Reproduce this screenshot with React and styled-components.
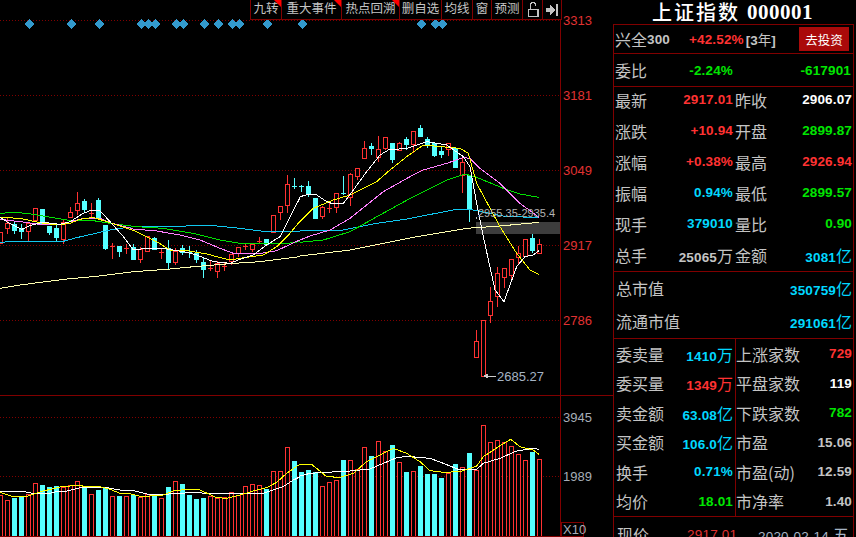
import styled, { createGlobalStyle } from 'styled-components';

const LINE = '#800000';
const RED = '#ff3232';
const GREEN = '#00e600';
const CYAN = '#00d8ff';
const WHITE = '#ffffff';
const GREY = '#c4c4c4';
const BAR = '#55ffff';

const GlobalStyle = createGlobalStyle`
  html, body {
    margin: 0;
    height: 100%;
    background: #000;
    overflow: hidden;
  }
`;

const Page = styled.div`
  display: flex;
  width: 856px;
  height: 537px;
  background: #000;
  overflow: hidden;
  font-family: 'Liberation Sans', 'Noto Sans CJK SC', sans-serif;
`;

const ChartColumn = styled.div`
  position: relative;
  display: flex;
  flex-direction: column;
  width: 613px;
  flex: none;
`;

const Pane = styled.svg`
  display: block;
  width: 613px;
  height: ${props => props.$height}px;
  flex: none;
`;

const Toolbar = styled.div`
  position: absolute;
  top: 0;
  left: 250px;
  display: flex;
  height: 19px;
  background: #000;
  border-bottom: 1px solid ${LINE};
  border-right: 1px solid ${LINE};
`;

const ToolButton = styled.div`
  position: relative;
  display: flex;
  align-items: center;
  justify-content: center;
  box-sizing: border-box;
  width: ${props => props.$width}px;
  border-left: 1px solid ${LINE};
  color: ${GREY};
  font-size: 12.5px;
  line-height: 19px;
  white-space: nowrap;

  ${props =>
    props.$flag &&
    `&::after {
      content: '';
      position: absolute;
      top: 0;
      right: 0;
      border-top: 7px solid #ff0000;
      border-left: 7px solid transparent;
    }`}
`;

const SidePanel = styled.div`
  display: flex;
  flex-direction: column;
  width: 243px;
  height: 537px;
  flex: none;
`;

const Title = styled.div`
  height: 24px;
  display: flex;
  align-items: center;
  justify-content: center;
  gap: 7px;
  padding-right: 4px;
  color: #fff;
  font-family: 'Noto Sans CJK SC', sans-serif;
  font-size: 20px;
  font-weight: 500;
  line-height: 24px;
  letter-spacing: 2px;
  white-space: nowrap;

  span {
    font-family: 'Liberation Serif', serif;
    font-size: 21px;
    font-weight: 700;
    letter-spacing: 0.5px;
  }
`;

const Section = styled.div`
  box-sizing: border-box;
  width: 241px;
  height: ${props => props.$height}px;
  border: 1px solid ${LINE};
  border-top: ${props => (props.$first ? `1px solid ${LINE}` : 'none')};
  flex: none;
`;

const PromoRow = styled(Section)`
  display: flex;
  align-items: center;
  padding-left: 1px;
`;

const Label = styled.span`
  color: ${GREY};
  font-family: 'Noto Sans CJK SC', sans-serif;
  font-size: 16px;
  line-height: 20px;
  white-space: nowrap;
`;

const Num = styled.span`
  color: ${props => props.$color};
  font-family: 'Liberation Sans', sans-serif;
  font-size: 13.5px;
  font-weight: 700;
  letter-spacing: 0.15px;
  white-space: nowrap;
`;

const Unit = styled.span`
  font-family: 'Noto Sans CJK SC', sans-serif;
  font-size: 16px;
  font-weight: 400;
  letter-spacing: 0;
`;

const PromoRate = styled(Num)`
  margin-left: 19px;
`;

const PromoTerm = styled.span`
  margin-left: 2px;
  color: ${GREY};
  font-size: 13.5px;
  font-weight: 700;
  white-space: nowrap;

  i {
    font-family: 'Noto Sans CJK SC', sans-serif;
    font-style: normal;
    font-weight: 400;
  }
`;

const InvestButton = styled.div`
  margin-left: auto;
  margin-right: 4px;
  width: 50px;
  height: 24px;
  display: flex;
  align-items: center;
  justify-content: center;
  background: #aa0a0a;
  color: #fff;
  font-family: 'Noto Sans CJK SC', sans-serif;
  font-size: 12.5px;
`;

const OrderRow = styled(Section)`
  display: grid;
  grid-template-columns: 119px 1fr;
  align-items: center;
  padding-right: 2px;
`;

const Cell = styled.div`
  display: flex;
  align-items: center;
  justify-content: space-between;
  padding-left: ${props => props.$left || 0}px;
  padding-right: ${props => props.$right || 0}px;
  min-width: 0;
`;

const QuoteGrid = styled(Section)`
  display: grid;
  grid-template-columns: 121px 1fr;
  grid-auto-rows: 31px;
  align-content: center;
  align-items: center;
  padding: 0 1px 4px 0;
`;

const WideRows = styled(Section)`
  display: grid;
  grid-auto-rows: 33px;
  align-content: center;
  align-items: center;
  padding: 0 1px 2px 0;
`;

const BreadthGrid = styled(Section)`
  display: grid;
  grid-template-columns: 121px 1fr;
  grid-auto-rows: 1fr;
  align-items: center;
  padding-right: 1px;
  background: linear-gradient(${LINE}, ${LINE}) 121px 0 / 1px 100% no-repeat;
`;

const PriceRow = styled.div`
  box-sizing: border-box;
  width: 241px;
  flex: 1;
  display: flex;
  align-items: center;
  padding: 5px 4px 0 3px;
  border-left: 1px solid ${LINE};
  border-right: 1px solid ${LINE};
`;

const ThinNum = styled.span`
  color: ${props => props.$color};
  font-size: 13.5px;
  letter-spacing: 0.2px;
  white-space: nowrap;
  margin-left: ${props => props.$gap};
`;

// chart data, y values read off the picture at 3x
const candlesLeft = [
  [155, 155, 190, 190, 1], [115, 130, 145, 162, 1], [125, 132, 150, 162, 0], [132, 145, 152, 178, 0],
  [130, 130, 152, 185, 1], [85, 85, 120, 120, 1], [88, 88, 130, 130, 0], [137, 137, 157, 165, 0],
  [135, 145, 172, 185, 0], [120, 125, 178, 192, 1], [80, 95, 110, 110, 1], [37, 68, 90, 105, 1],
  [57, 64, 88, 100, 0], [70, 100, 100, 118, 1], [55, 60, 112, 115, 0], [135, 135, 205, 210, 0],
  [188, 198, 198, 236, 1], [198, 198, 214, 232, 0], [192, 205, 205, 222, 1], [192, 200, 237, 237, 0],
  [200, 208, 238, 248, 1], [167, 167, 212, 215, 1], [170, 175, 207, 207, 0], [205, 217, 217, 237, 1],
  [180, 205, 246, 268, 0], [205, 212, 246, 255, 1], [195, 203, 215, 225, 0], [198, 217, 217, 235, 0],
  [210, 218, 238, 248, 0], [232, 246, 268, 293, 0], [243, 265, 265, 272, 1], [243, 250, 272, 293, 1],
  [250, 257, 257, 272, 1], [222, 222, 243, 255, 1], [202, 202, 218, 232, 1], [190, 198, 198, 210, 1],
  [192, 192, 206, 215, 1], [172, 182, 182, 190, 1], [177, 177, 192, 195, 0], [105, 105, 156, 156, 1],
  [78, 78, 97, 120, 1], [-15, 12, 75, 100, 1], [-6, 17, 17, 28, 0], [15, 17, 17, 35, 0],
];

const candlesRight = [
  [184, 198, 218, 232, 0], [234, 234, 294, 297, 0], [258, 262, 288, 298, 1], [250, 263, 263, 278, 1],
  [220, 220, 262, 280, 1], [168, 220, 220, 225, 0], [160, 163, 232, 258, 1], [145, 145, 167, 180, 1],
  [62, 85, 115, 115, 1], [70, 78, 85, 105, 0], [47, 88, 110, 125, 1], [52, 52, 84, 90, 1],
  [70, 70, 118, 128, 0], [65, 70, 90, 92, 1], [50, 57, 72, 90, 0], [34, 34, 72, 98, 1],
  [15, 25, 48, 52, 0], [50, 58, 75, 85, 0], [68, 68, 105, 110, 0], [78, 93, 102, 115, 0],
  [68, 68, 88, 108, 1], [85, 85, 140, 143, 0], [115, 127, 165, 218, 1], [165, 165, 268, 305, 0],
  [630, 664, 712, 712, 1], [600, 600, 767, 767, 1], [502, 544, 584, 608, 1], [442, 460, 527, 560, 1],
  [445, 445, 470, 505, 1], [418, 418, 466, 485, 1], [378, 400, 410, 432, 1], [358, 358, 407, 410, 1],
  [343, 355, 390, 400, 0], [358, 372, 400, 400, 1],
];

const candles = [
  ...candlesLeft.map(c => [...c.slice(0, 4).map(v => Math.round(180 + v / 3)), c[4]]),
  ...candlesRight.map(c => [...c.slice(0, 4).map(v => Math.round(120 + v / 3)), c[4]]),
];

const volumes = [
  [300, 1], [315, 1], [308, 0], [305, 0], [297, 1], [264, 1], [270, 0], [276, 0], [273, 0], [276, 1],
  [270, 1], [258, 1], [276, 0], [297, 1], [285, 0], [278, 0], [303, 1], [303, 0], [303, 1], [300, 0],
  [306, 1], [297, 1], [300, 0], [309, 1], [276, 0], [258, 1], [267, 0], [300, 0], [312, 0], [309, 0],
  [303, 1], [309, 1], [306, 1], [291, 1], [300, 1], [273, 1], [267, 1], [270, 1], [282, 0], [228, 1],
  [228, 1], [156, 1], [198, 0], [231, 0], [225, 0], [231, 0], [273, 1], [261, 1], [255, 1], [195, 0],
  [195, 1], [222, 1], [156, 1], [183, 0], [138, 1], [168, 1], [150, 0], [201, 1], [231, 0], [228, 1],
  [213, 0], [237, 0], [237, 0], [249, 0], [234, 1], [207, 0], [216, 1], [174, 0], [225, 1], [90, 1],
  [141, 1], [135, 1], [141, 1], [153, 1], [177, 1], [195, 1], [171, 0], [192, 1],
].map(([top, up]) => [Math.round(395 + top / 3), up]);

const toPoints = (left, right) =>
  [
    ...left.map(([x, y]) => [x / 3, 180 + y / 3]),
    ...right.map(([x, y]) => [300 + x / 3, 120 + y / 3]),
  ]
    .map(p => p.join(','))
    .join(' ');

const mainLines = [
  {
    color: '#ffffb0',
    points: toPoints(
      [[0, 325], [60, 315], [200, 297], [280, 290], [400, 275], [500, 268], [560, 262], [700, 250], [780, 245], [899, 230]],
      [[0, 408], [150, 390], [350, 350], [500, 325], [600, 318], [717, 307]]
    ),
  },
  {
    color: '#10c8f0',
    points: toPoints(
      [[0, 188], [30, 184], [190, 184], [230, 173], [300, 157], [340, 148], [400, 140], [640, 137], [720, 145], [800, 155], [899, 155]],
      [[0, 333], [130, 330], [230, 310], [320, 297], [470, 268], [510, 268], [620, 290], [717, 292]]
    ),
  },
  {
    color: '#00e000',
    points: toPoints(
      [[0, 100], [50, 97], [100, 103], [200, 120], [280, 122], [330, 130], [410, 140], [490, 145], [580, 160], [660, 180], [720, 190], [850, 192], [899, 185]],
      [[0, 367], [70, 360], [150, 335], [240, 285], [340, 230], [440, 180], [495, 162], [530, 172], [610, 205], [660, 222], [717, 232]]
    ),
  },
  {
    color: '#ff80ff',
    points: toPoints(
      [[0, 118], [60, 125], [120, 133], [170, 135], [210, 125], [250, 115], [300, 115], [330, 128], [400, 147], [470, 153], [540, 165], [600, 180], [660, 205], [700, 220], [770, 222], [830, 212], [899, 180]],
      [[0, 360], [30, 348], [90, 330], [150, 295], [250, 215], [330, 170], [370, 150], [440, 130], [490, 113], [510, 115], [540, 145], [600, 190], [660, 250], [717, 292]]
    ),
  },
  {
    color: '#ffff00',
    points: toPoints(
      [[0, 112], [60, 115], [120, 128], [170, 135], [210, 130], [240, 118], [280, 112], [320, 125], [380, 145], [410, 155], [470, 185], [510, 210], [560, 212], [620, 222], [690, 240], [740, 232], [790, 225], [830, 200], [870, 160], [899, 125]],
      [[0, 305], [40, 265], [100, 240], [150, 225], [230, 185], [270, 150], [320, 110], [370, 75], [480, 85], [505, 100], [530, 190], [600, 320], [650, 400], [690, 450], [717, 463]]
    ),
  },
  {
    color: '#ffffff',
    points: toPoints(
      [[0, 112], [25, 128], [65, 148], [95, 135], [130, 127], [180, 133], [210, 125], [250, 100], [275, 90], [298, 90], [330, 125], [370, 170], [400, 210], [440, 205], [500, 207], [550, 215], [590, 225], [640, 245], [690, 250], [715, 240], [760, 225], [800, 195], [840, 170], [870, 110], [899, 55]],
      [[0, 230], [30, 222], [50, 225], [80, 245], [100, 252], [130, 250], [160, 210], [200, 155], [240, 105], [265, 90], [320, 85], [380, 65], [440, 75], [490, 110], [510, 140], [530, 250], [550, 350], [585, 510], [612, 545], [650, 440], [675, 410], [700, 405], [717, 392]]
    ),
  },
];

const volPoints = (left, right) =>
  [
    ...left.map(([x, y]) => [x / 3, 395 + y / 3]),
    ...right.map(([x, y]) => [300 + x / 3, 395 + y / 3]),
  ]
    .map(p => p.join(','))
    .join(' ');

const volumeLines = [
  {
    color: '#ffffff',
    points: volPoints(
      [[0, 290], [75, 290], [100, 296], [150, 295], [170, 290], [200, 288], [240, 278], [320, 278], [370, 287], [400, 287], [440, 297], [490, 300], [520, 295], [590, 293], [640, 296], [730, 297], [790, 295], [820, 285], [850, 275], [880, 255], [899, 246]],
      [[0, 243], [30, 235], [80, 232], [150, 228], [210, 222], [250, 205], [290, 188], [320, 184], [390, 190], [430, 205], [480, 225], [530, 223], [550, 205], [600, 190], [650, 168], [700, 160], [717, 163]]
    ),
  },
  {
    color: '#ffff00',
    points: volPoints(
      [[0, 292], [40, 305], [75, 306], [100, 298], [130, 288], [180, 276], [220, 272], [300, 275], [330, 283], [360, 295], [390, 296], [420, 304], [450, 303], [490, 300], [520, 288], [560, 283], [600, 285], [650, 308], [680, 310], [720, 300], [770, 285], [800, 278], [830, 262], [860, 235], [899, 208]],
      [[0, 210], [35, 208], [80, 245], [120, 247], [160, 235], [200, 200], [240, 180], [280, 160], [320, 175], [360, 200], [390, 227], [430, 232], [480, 230], [530, 213], [550, 185], [600, 152], [632, 133], [660, 155], [700, 165], [717, 178]]
    ),
  },
];

const diamonds = [29, 71, 99, 141, 148, 155, 176, 183, 204, 218, 232, 239, 267, 302, 421, 435, 442];
const mainGrid = [20, 95, 170, 245, 320];
const mainTicks = [
  ['3313', 25], ['3181', 100], ['3049', 175], ['2917', 250], ['2786', 325],
];

const toolItems = [
  { text: '九转', width: 31, flag: true },
  { text: '重大事件', width: 60, flag: true },
  { text: '热点回溯', width: 58, flag: true },
  { text: '删自选', width: 42 },
  { text: '均线', width: 31 },
  { text: '窗', width: 19 },
  { text: '预测', width: 31 },
];

const ChartText = styled.text`
  font-family: 'Liberation Sans', sans-serif;
  font-size: ${props => props.$size || 13}px;
  fill: ${props => props.$color};
`;

function Candle({ index, data }) {
  const [hi, top, bot, lo, up] = data;
  const x = 7 * index + 0.5;
  const color = up ? RED : BAR;
  if (top === bot) {
    return (
      <g stroke={color}>
        <line x1={x} x2={x} y1={hi} y2={lo} />
        <line x1={x - 2.5} x2={x + 2.5} y1={top + 0.5} y2={top + 0.5} />
      </g>
    );
  }
  return (
    <g stroke={color}>
      <line x1={x} x2={x} y1={hi} y2={top} />
      <line x1={x} x2={x} y1={bot} y2={lo} />
      <rect
        x={x - 2}
        y={top + 0.5}
        width={4}
        height={bot - top}
        fill={up ? '#000' : BAR}
      />
    </g>
  );
}

function MainChart() {
  return (
    <Pane $height={396} viewBox='0 0 613 396' shapeRendering='crispEdges'>
      {mainGrid.map(y => (
        <line key={y} x1={0} x2={560} y1={y + 0.5} y2={y + 0.5} stroke={LINE} strokeDasharray='1 2' />
      ))}
      {diamonds.map(x => (
        <path key={x} d={`M${x} 19 L${x + 5} 24 L${x} 29 L${x - 5} 24 Z`} fill='#3399cc' />
      ))}
      {candles.map((c, i) => (
        <Candle key={i} index={i} data={c} />
      ))}
      <rect x={476} y={222} width={84} height={12} fill='#444' fillOpacity={0.9} />
      {mainLines.map(l => (
        <polyline key={l.color} points={l.points} fill='none' stroke={l.color} strokeWidth={1} />
      ))}
      <rect x={476} y={217} width={1} height={2} fill='#bbb' />
      <ChartText x={478} y={217} $size={11} $color='#b4b4b4'>2955.35-2935.4</ChartText>
      <path d='M483 376 L488 373.5 L488 378.5 Z' fill='#ccc' />
      <line x1={487} x2={496} y1={376.5} y2={376.5} stroke='#ccc' />
      <ChartText x={497} y={381} $color='#a6b4c4'>2685.27</ChartText>
      <line x1={560.5} x2={560.5} y1={0} y2={396} stroke={LINE} />
      {mainTicks.map(([text, y]) => (
        <ChartText key={text} x={563} y={y} $color='#e03232'>
          {text}
        </ChartText>
      ))}
      <line x1={0} x2={613} y1={396} y2={396} stroke={LINE} strokeWidth={2} />
    </Pane>
  );
}

function VolumeChart() {
  return (
    <Pane $height={141} viewBox='0 396 613 141' shapeRendering='crispEdges'>
      {[417, 476].map(y => (
        <line key={y} x1={0} x2={560} y1={y + 0.5} y2={y + 0.5} stroke={LINE} strokeDasharray='1 2' />
      ))}
      {volumes.map(([top, up], i) => (
        <rect
          key={i}
          x={7 * i - 1.5}
          y={top + 0.5}
          width={4}
          height={536 - top}
          fill={up ? '#000' : BAR}
          stroke={up ? RED : BAR}
        />
      ))}
      {volumeLines.map(l => (
        <polyline key={l.color} points={l.points} fill='none' stroke={l.color} strokeWidth={1} />
      ))}
      <line x1={560.5} x2={560.5} y1={396} y2={537} stroke={LINE} />
      <line x1={0} x2={560} y1={536.5} y2={536.5} stroke={LINE} />
      <ChartText x={563} y={422} $color='#a6aeb8'>3945</ChartText>
      <ChartText x={563} y={481} $color='#a6aeb8'>1989</ChartText>
      <rect x={561.5} y={522.5} width={22} height={14} fill='none' stroke={LINE} />
      <ChartText x={563} y={534} $color='#a6aeb8'>X10</ChartText>
    </Pane>
  );
}

function LockIcon() {
  return (
    <svg width='12' height='15' viewBox='0 0 12 15' shapeRendering='crispEdges'>
      <path d='M1.5 7.5V14.5H11V7.5ZM3.5 7.5V2.5Q3.5 0.8 6 0.8Q8.5 0.8 8.5 2.5V4' fill='none' stroke={GREY} strokeWidth='1.2' />
    </svg>
  );
}

function NextIcon() {
  return (
    <svg width='13' height='12' viewBox='0 0 13 12' shapeRendering='crispEdges'>
      <path d='M0 4H4V1L9 6L4 11V8H0ZM10 0H12V12H10Z' fill={GREY} />
    </svg>
  );
}

function Tools() {
  return (
    <Toolbar>
      {toolItems.map(item => (
        <ToolButton key={item.text} $width={item.width} $flag={item.flag}>
          {item.text}
        </ToolButton>
      ))}
      <ToolButton $width={20}><LockIcon /></ToolButton>
      <ToolButton $width={19}><NextIcon /></ToolButton>
    </Toolbar>
  );
}

const quotes = [
  ['最新', '2917.01', RED, '昨收', '2906.07', WHITE],
  ['涨跌', '+10.94', RED, '开盘', '2899.87', GREEN],
  ['涨幅', '+0.38%', RED, '最高', '2926.94', RED],
  ['振幅', '0.94%', CYAN, '最低', '2899.57', GREEN],
  ['现手', '379010', CYAN, '量比', '0.90', GREEN],
  ['总手', '25065', GREY, '金额', '3081', CYAN],
];

const breadth = [
  ['委卖量', '1410', '万', CYAN, '上涨家数', '729', RED],
  ['委买量', '1349', '万', RED, '平盘家数', '119', WHITE],
  ['卖金额', '63.08', '亿', CYAN, '下跌家数', '782', GREEN],
  ['买金额', '106.0', '亿', CYAN, '市盈', '15.06', GREY],
  ['换手', '0.71%', '', CYAN, '市盈(动)', '12.59', GREY],
  ['均价', '18.01', '', GREEN, '市净率', '1.40', GREY],
];

function SideInfo() {
  return (
    <SidePanel>
      <Title>
        上证指数<span>000001</span>
      </Title>
      <PromoRow $first $height={30}>
        <Label>兴全</Label>
        <Num $color={GREY}>300</Num>
        <PromoRate $color={RED}>+42.52%</PromoRate>
        <PromoTerm>
          [3<i>年</i>]
        </PromoTerm>
        <InvestButton>去投资</InvestButton>
      </PromoRow>
      <OrderRow $height={33}>
        <Cell $left={1}>
          <Label>委比</Label>
          <Num $color={GREEN}>-2.24%</Num>
        </Cell>
        <Cell>
          <span />
          <Num $color={GREEN}>-617901</Num>
        </Cell>
      </OrderRow>
      <QuoteGrid $height={185}>
        {quotes.map(([label, value, color, label2, value2, color2]) => [
          <Cell key={label} $left={1} $right={2}>
            <Label>{label}</Label>
            <Num $color={color}>
              {value}
              {label === '总手' && <Unit>万</Unit>}
            </Num>
          </Cell>,
          <Cell key={label2}>
            <Label>{label2}</Label>
            <Num $color={color2}>
              {value2}
              {label2 === '金额' && <Unit>亿</Unit>}
            </Num>
          </Cell>,
        ])}
      </QuoteGrid>
      <WideRows $height={67}>
        <Cell $left={2}>
          <Label>总市值</Label>
          <Num $color={CYAN}>
            350759<Unit>亿</Unit>
          </Num>
        </Cell>
        <Cell $left={2}>
          <Label>流通市值</Label>
          <Num $color={CYAN}>
            291061<Unit>亿</Unit>
          </Num>
        </Cell>
      </WideRows>
      <BreadthGrid $height={178}>
        {breadth.map(([label, value, unit, color, label2, value2, color2]) => [
          <Cell key={label} $left={2} $right={2}>
            <Label>{label}</Label>
            <Num $color={color}>
              {value}
              {unit && <Unit>{unit}</Unit>}
            </Num>
          </Cell>,
          <Cell key={label2} $left={1}>
            <Label>{label2}</Label>
            <Num $color={color2}>{value2}</Num>
          </Cell>,
        ])}
      </BreadthGrid>
      <PriceRow>
        <Label>现价</Label>
        <ThinNum $color='#e03232' $gap='38px'>2917.01</ThinNum>
        <ThinNum $color='#a6b4c4' $gap='auto'>
          2020-02-14 <Unit>五</Unit>
        </ThinNum>
      </PriceRow>
    </SidePanel>
  );
}

export default function App() {
  return (
    <>
      <GlobalStyle />
      <Page>
        <ChartColumn>
          <MainChart />
          <VolumeChart />
          <Tools />
        </ChartColumn>
        <SideInfo />
      </Page>
    </>
  );
}
